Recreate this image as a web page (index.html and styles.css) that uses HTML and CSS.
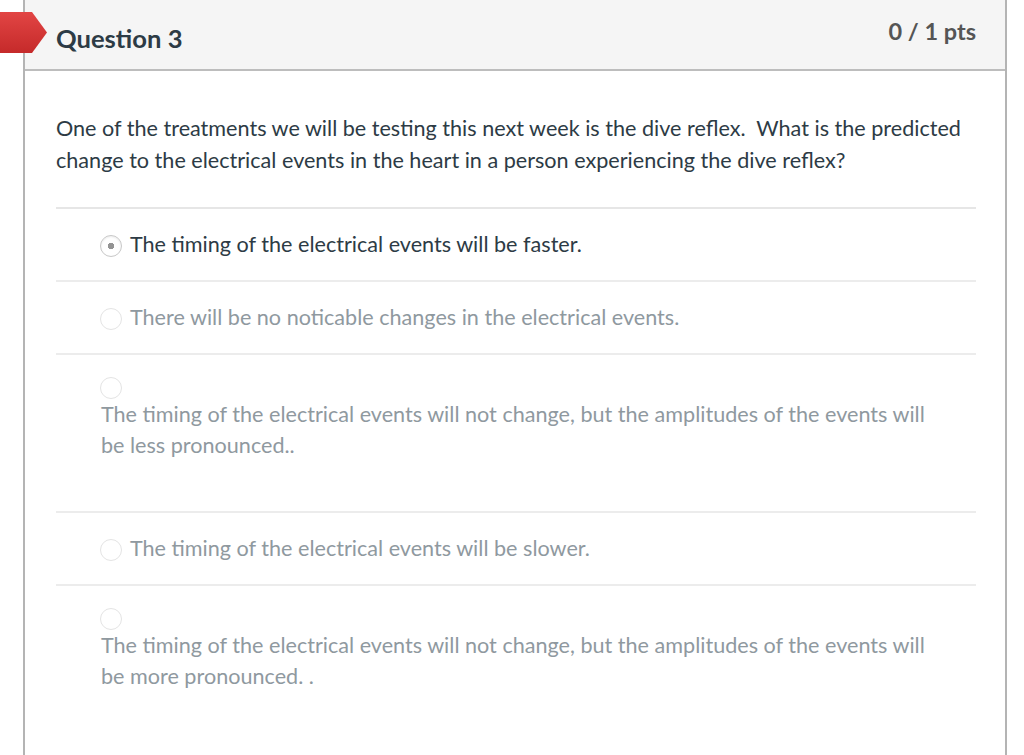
FILE: index.html
```html
<!DOCTYPE html>
<html lang="en">
<head>
    <meta charset="UTF-8">
    <title>Question 3</title>
    <link rel="stylesheet" href="styles.css">
</head>
<body>
    <div class="question">
        <div class="header">
            <span class="flag"></span>
            <span class="title">Question 3</span>
            <span class="points">0 / 1 pts</span>
        </div>
        <div class="body">
            <div class="text">
                One of the treatments we will be testing this next week is the dive reflex.&nbsp; What is the predicted change to the electrical events in the heart in a person experiencing the dive reflex?
            </div>
            <div class="answers">
                <div class="answer selected">
                    <span class="radio"></span><span class="label">The timing of the electrical events will be faster.</span>
                </div>
                <div class="answer">
                    <span class="radio"></span><span class="label">There will be no noticable changes in the electrical events.</span>
                </div>
                <div class="answer long">
                    <span class="radio"></span><span class="label">The timing of the electrical events will not change, but the amplitudes of the events will be less pronounced..</span>
                </div>
                <div class="answer">
                    <span class="radio"></span><span class="label">The timing of the electrical events will be slower.</span>
                </div>
                <div class="answer long last">
                    <span class="radio"></span><span class="label">The timing of the electrical events will not change, but the amplitudes of the events will be more pronounced. .</span>
                </div>
            </div>
        </div>
    </div>
</body>
</html>
```

FILE: styles.css
```css
body {
    margin: 0;
    background: #fff;
    font-family: Lato, "Open Sans", sans-serif;
    color: #2d3b45;
}

.question {
    position: relative;
    margin-left: 23px;
    width: 980px;
    height: 755px;
    border-left: 2px solid #b4b4b4;
    border-right: 2px solid #b4b4b4;
}

.header {
    display: flex;
    align-items: center;
    justify-content: space-between;
    height: 69px;
    padding: 0 29px 0 31px;
    background: #f5f5f5;
    border-bottom: 2px solid #bdbdbd;
}

.flag {
    position: absolute;
    left: -25px;
    top: 12px;
    width: 47px;
    height: 41px;
    background: linear-gradient(#e24544, #c52a2a);
    clip-path: polygon(0 0, 32px 0, 47px 50%, 32px 100%, 0 100%);
}

.title {
    font-size: 25.6px;
    font-weight: 700;
    margin-top: 6px;
}

.points {
    font-size: 23.5px;
    font-weight: 700;
    color: #555;
    margin-top: -7px;
}

.body {
    padding: 41px 29px 0 31px;
}

.text {
    font-size: 21.6px;
    line-height: 32px;
    padding-bottom: 31px;
    border-bottom: 2px solid #e6e6e6;
}

.answer {
    display: flex;
    flex-wrap: wrap;
    align-items: center;
    padding: 20px 44px;
    font-size: 21.6px;
    line-height: 31px;
    color: #8f999f;
    border-bottom: 2px solid #ececec;
}

.answer.long {
    padding-top: 19px;
    padding-bottom: 50px;
}

.answer.last {
    border-bottom: none;
}

.answer.selected {
    color: #2d3b45;
}

.radio {
    flex: none;
    box-sizing: border-box;
    width: 22px;
    height: 22px;
    margin: 3px 8px 0 0;
    border: 1px solid #e4e4e4;
    border-radius: 50%;
}

.selected .radio {
    border-color: #c8c8c8;
    box-shadow: inset 0 1px 2px rgba(0, 0, 0, 0.08);
    background: radial-gradient(circle, #949494 0 3px, #fff 3.5px);
}

.long .label {
    margin-left: 1px;
}
```
